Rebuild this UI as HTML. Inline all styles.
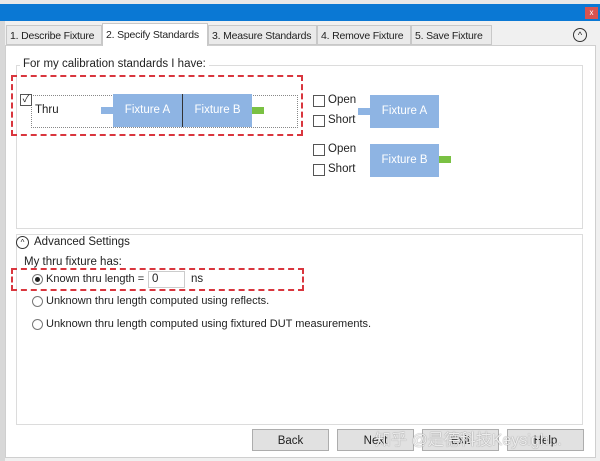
<!DOCTYPE html><html><head><style>
body{margin:0;width:600px;height:461px;overflow:hidden;background:#f0f0f0;font-family:"Liberation Sans","Noto Sans CJK SC",sans-serif;font-size:11.5px;color:#222;position:relative}
.a{position:absolute;white-space:nowrap}
.tab{position:absolute;top:25px;height:20px;border:1px solid #c8c8c8;background:#eaeaea;line-height:20px;padding:0 3px;font-size:10.5px;box-sizing:border-box;white-space:nowrap;overflow:hidden;letter-spacing:-0.2px}
.fx{position:absolute;background:#8eb4e3;color:#fff;text-align:center;font-size:11.5px}
.cb{position:absolute;width:10px;height:10px;border:1px solid #555;background:#fff}
.rb{position:absolute;width:9px;height:9px;border:1px solid #777;border-radius:50%;background:#fff}
.btn{position:absolute;top:429px;width:77px;height:22px;border:1px solid #adadad;background:#e1e1e1;text-align:center;line-height:22px;box-sizing:border-box}
.dash{position:absolute;border:2px dashed #d9363e}
</style></head><body>
<div class="a" style="left:0;top:0;width:600px;height:4px;background:#e8e8e8"></div>
<div class="a" style="left:0;top:4px;width:600px;height:17px;background:#0a78d4"></div>
<div class="a" style="left:585px;top:7px;width:13px;height:12px;background:#d9534f;color:#fff;font-size:8px;text-align:center;line-height:12px">x</div>
<div class="a" style="left:0;top:21px;width:5px;height:440px;background:#d8d8d8"></div>
<div class="a" style="left:5px;top:45px;width:589px;height:411px;background:#fff;border:1px solid #cfcfcf"></div>
<div class="tab" style="left:6px;width:96px">1. Describe Fixture</div>
<div class="tab" style="left:102px;top:23px;height:23px;width:106px;background:#fff;border-bottom:none;line-height:22px">2. Specify Standards</div>
<div class="tab" style="left:208px;width:109px">3. Measure Standards</div>
<div class="tab" style="left:317px;width:94px">4. Remove Fixture</div>
<div class="tab" style="left:411px;width:81px">5. Save Fixture</div>
<div class="a" style="left:573px;top:28px;width:12px;height:12px;border:1px solid #333;border-radius:50%;font-size:9px;text-align:center;line-height:12px">^</div>
<div class="a" style="left:16px;top:65px;width:565px;height:162px;border:1px solid #dcdcdc"></div>
<div class="a" style="left:20px;top:58px;background:#fff;padding:0 3px">For my calibration standards I have:</div>
<div class="a" style="left:31px;top:95px;width:265px;height:31px;border:1px dotted #888"></div>
<div class="cb" style="left:20px;top:94px;font-size:10px;line-height:9px;text-align:center">✓</div>
<div class="a" style="left:35px;top:104px">Thru</div>
<div class="a" style="left:101px;top:107px;width:12px;height:7px;background:#8eb4e3"></div>
<div class="fx" style="left:113px;top:94px;width:69px;height:33px;line-height:33px">Fixture A</div>
<div class="fx" style="left:183px;top:94px;width:69px;height:33px;line-height:33px">Fixture B</div>
<div class="a" style="left:182px;top:94px;width:1px;height:33px;background:#333"></div>
<div class="a" style="left:252px;top:107px;width:12px;height:7px;background:#7ac143"></div>
<div class="dash" style="left:11px;top:75px;width:288px;height:57px"></div>
<div class="cb" style="left:313px;top:95px"></div><div class="a" style="left:328px;top:94px">Open</div>
<div class="cb" style="left:313px;top:115px"></div><div class="a" style="left:328px;top:114px">Short</div>
<div class="a" style="left:358px;top:108px;width:12px;height:7px;background:#8eb4e3"></div>
<div class="fx" style="left:370px;top:95px;width:69px;height:33px;line-height:33px">Fixture A</div>
<div class="cb" style="left:313px;top:144px"></div><div class="a" style="left:328px;top:143px">Open</div>
<div class="cb" style="left:313px;top:164px"></div><div class="a" style="left:328px;top:163px">Short</div>
<div class="fx" style="left:370px;top:144px;width:69px;height:33px;line-height:33px">Fixture B</div>
<div class="a" style="left:439px;top:156px;width:12px;height:7px;background:#7ac143"></div>
<div class="a" style="left:16px;top:234px;width:565px;height:189px;border:1px solid #dcdcdc"></div>
<div class="a" style="left:16px;top:236px;width:11px;height:11px;border:1px solid #333;border-radius:50%;font-size:8px;text-align:center;line-height:12px;background:#fff">^</div>
<div class="a" style="left:31px;top:236px;background:#fff;padding:0 3px">Advanced Settings</div>
<div class="a" style="left:24px;top:256px">My thru fixture has:</div>
<div class="rb" style="left:32px;top:274px"></div><div class="a" style="left:35px;top:277px;width:5px;height:5px;border-radius:50%;background:#222"></div>
<div class="a" style="left:46px;top:273px;font-size:11px">Known thru length =</div>
<div class="a" style="left:148px;top:271px;width:37px;height:17px;border:1px solid #ccc;box-sizing:border-box;padding-left:3px;line-height:15px">0</div>
<div class="a" style="left:191px;top:273px">ns</div>
<div class="dash" style="left:11px;top:268px;width:289px;height:19px"></div>
<div class="rb" style="left:32px;top:296px"></div><div class="a" style="left:46px;top:295px;font-size:11px">Unknown thru length computed using reflects.</div>
<div class="rb" style="left:32px;top:319px"></div><div class="a" style="left:46px;top:318px;font-size:11px">Unknown thru length computed using fixtured DUT measurements.</div>
<div class="btn" style="left:252px">Back</div>
<div class="btn" style="left:337px">Next</div>
<div class="btn" style="left:422px">Exit</div>
<div class="btn" style="left:507px">Help</div>
<div class="a" style="left:375px;top:426px;font-size:16px;color:rgba(255,255,255,0.85);text-shadow:0 0 1px #666">知乎 @是德科技Keysigh...</div>
</body></html>
